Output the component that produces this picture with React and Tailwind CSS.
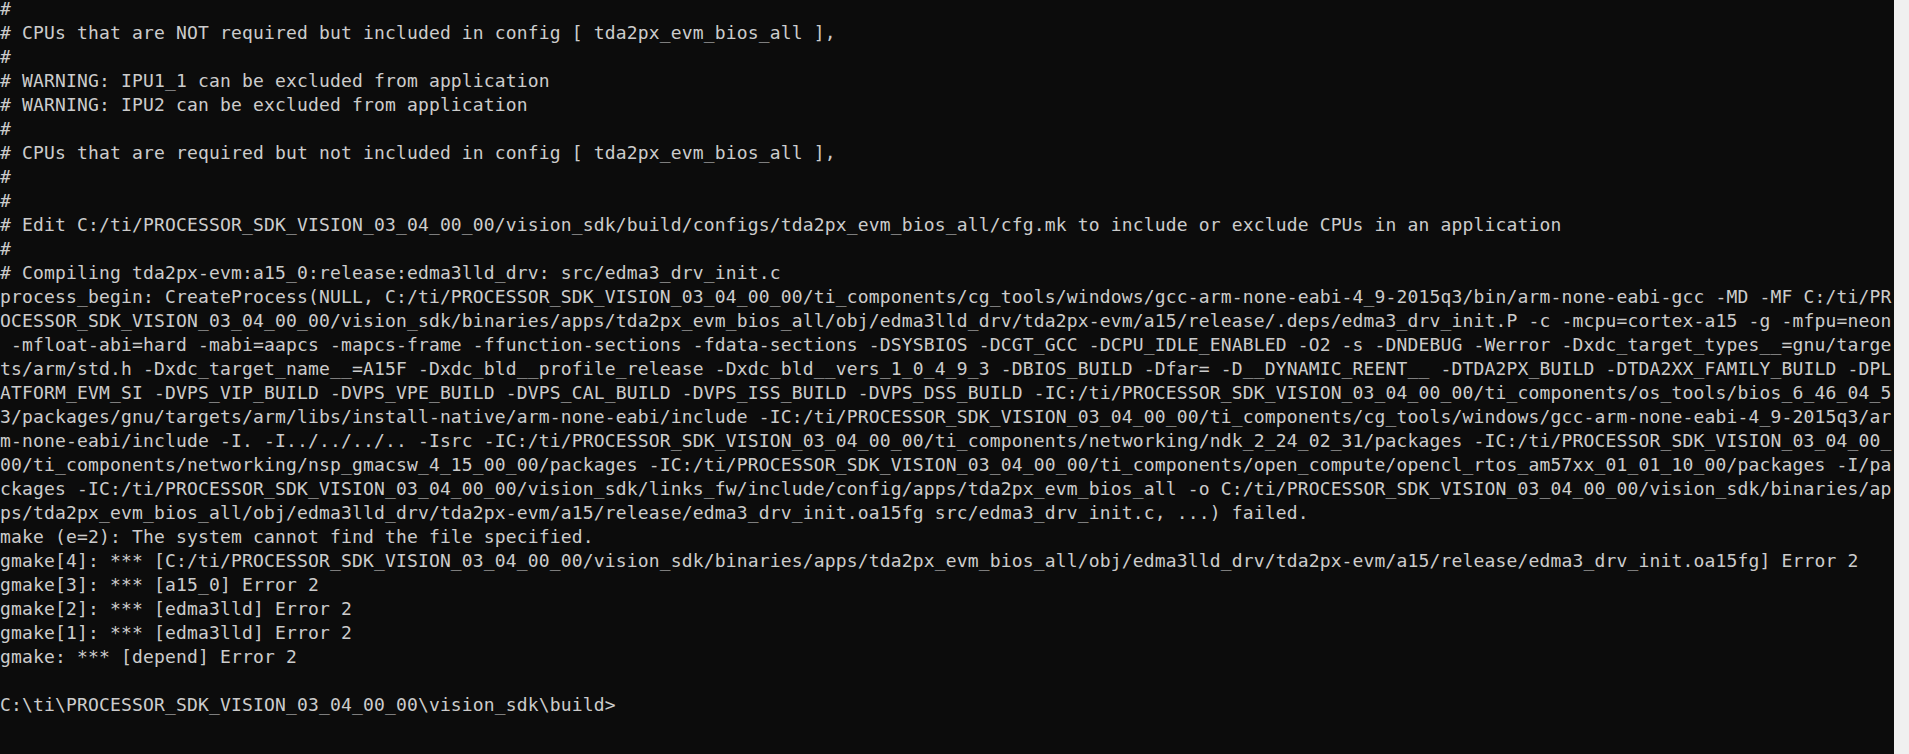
const lines = [
  '#',
  '# CPUs that are NOT required but included in config [ tda2px_evm_bios_all ],',
  '#',
  '# WARNING: IPU1_1 can be excluded from application',
  '# WARNING: IPU2 can be excluded from application',
  '#',
  '# CPUs that are required but not included in config [ tda2px_evm_bios_all ],',
  '#',
  '#',
  '# Edit C:/ti/PROCESSOR_SDK_VISION_03_04_00_00/vision_sdk/build/configs/tda2px_evm_bios_all/cfg.mk to include or exclude CPUs in an application',
  '#',
  '# Compiling tda2px-evm:a15_0:release:edma3lld_drv: src/edma3_drv_init.c',
  'process_begin: CreateProcess(NULL, C:/ti/PROCESSOR_SDK_VISION_03_04_00_00/ti_components/cg_tools/windows/gcc-arm-none-eabi-4_9-2015q3/bin/arm-none-eabi-gcc -MD -MF C:/ti/PR',
  'OCESSOR_SDK_VISION_03_04_00_00/vision_sdk/binaries/apps/tda2px_evm_bios_all/obj/edma3lld_drv/tda2px-evm/a15/release/.deps/edma3_drv_init.P -c -mcpu=cortex-a15 -g -mfpu=neon',
  ' -mfloat-abi=hard -mabi=aapcs -mapcs-frame -ffunction-sections -fdata-sections -DSYSBIOS -DCGT_GCC -DCPU_IDLE_ENABLED -O2 -s -DNDEBUG -Werror -Dxdc_target_types__=gnu/targe',
  'ts/arm/std.h -Dxdc_target_name__=A15F -Dxdc_bld__profile_release -Dxdc_bld__vers_1_0_4_9_3 -DBIOS_BUILD -Dfar= -D__DYNAMIC_REENT__ -DTDA2PX_BUILD -DTDA2XX_FAMILY_BUILD -DPL',
  'ATFORM_EVM_SI -DVPS_VIP_BUILD -DVPS_VPE_BUILD -DVPS_CAL_BUILD -DVPS_ISS_BUILD -DVPS_DSS_BUILD -IC:/ti/PROCESSOR_SDK_VISION_03_04_00_00/ti_components/os_tools/bios_6_46_04_5',
  '3/packages/gnu/targets/arm/libs/install-native/arm-none-eabi/include -IC:/ti/PROCESSOR_SDK_VISION_03_04_00_00/ti_components/cg_tools/windows/gcc-arm-none-eabi-4_9-2015q3/ar',
  'm-none-eabi/include -I. -I../../../.. -Isrc -IC:/ti/PROCESSOR_SDK_VISION_03_04_00_00/ti_components/networking/ndk_2_24_02_31/packages -IC:/ti/PROCESSOR_SDK_VISION_03_04_00_',
  '00/ti_components/networking/nsp_gmacsw_4_15_00_00/packages -IC:/ti/PROCESSOR_SDK_VISION_03_04_00_00/ti_components/open_compute/opencl_rtos_am57xx_01_01_10_00/packages -I/pa',
  'ckages -IC:/ti/PROCESSOR_SDK_VISION_03_04_00_00/vision_sdk/links_fw/include/config/apps/tda2px_evm_bios_all -o C:/ti/PROCESSOR_SDK_VISION_03_04_00_00/vision_sdk/binaries/ap',
  'ps/tda2px_evm_bios_all/obj/edma3lld_drv/tda2px-evm/a15/release/edma3_drv_init.oa15fg src/edma3_drv_init.c, ...) failed.',
  'make (e=2): The system cannot find the file specified.',
  'gmake[4]: *** [C:/ti/PROCESSOR_SDK_VISION_03_04_00_00/vision_sdk/binaries/apps/tda2px_evm_bios_all/obj/edma3lld_drv/tda2px-evm/a15/release/edma3_drv_init.oa15fg] Error 2',
  'gmake[3]: *** [a15_0] Error 2',
  'gmake[2]: *** [edma3lld] Error 2',
  'gmake[1]: *** [edma3lld] Error 2',
  'gmake: *** [depend] Error 2',
  '',
  'C:\\ti\\PROCESSOR_SDK_VISION_03_04_00_00\\vision_sdk\\build>',
];

export default function App() {
  return (
    <div className="flex h-screen w-full overflow-hidden bg-[#0c0c0c]">
      {/* console buffer */}
      <div className="flex-1 overflow-hidden">
        <div className="font-['DejaVu_Sans_Mono',monospace] text-[18px] leading-[24px] tracking-[0.16px] text-[#cccccc]">
          {lines.map((line, i) => (
            <div
              key={i}
              className={i === 0 ? 'h-[21px] leading-[18px] whitespace-pre' : 'h-[24px] whitespace-pre'}
            >
              {line}
            </div>
          ))}
        </div>
      </div>
      {/* scrollbar track */}
      <div className="w-[15px] shrink-0 bg-[#f0f0f0]" />
    </div>
  );
}
